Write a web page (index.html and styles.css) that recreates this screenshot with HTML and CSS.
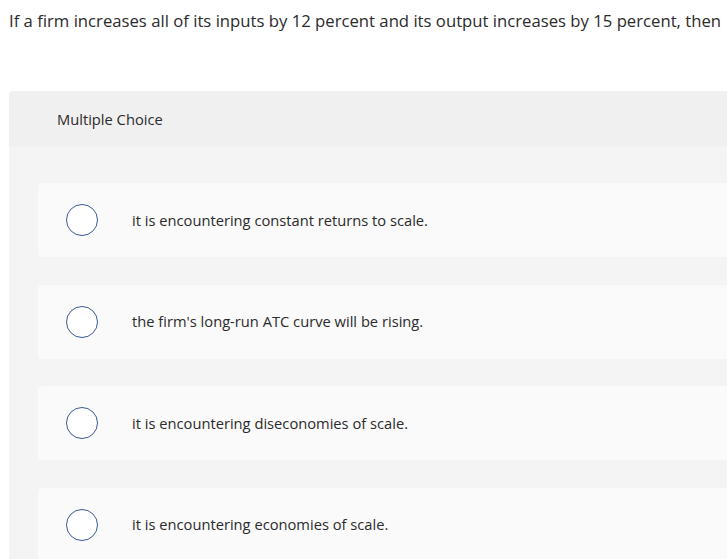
FILE: index.html
```html
<!DOCTYPE html>
<html>
<head>
<meta charset="utf-8">
<link rel="stylesheet" href="styles.css">
</head>
<body>
<p class="question">If a firm increases all of its inputs by 12 percent and its output increases by 15 percent, then</p>
<div class="panel">
  <div class="panel-head">Multiple Choice</div>
  <div class="panel-body">
    <div class="option"><span class="radio"></span><span class="label">it is encountering constant returns to scale.</span></div>
    <div class="option"><span class="radio"></span><span class="label">the firm's long-run ATC curve will be rising.</span></div>
    <div class="option"><span class="radio"></span><span class="label">it is encountering diseconomies of scale.</span></div>
    <div class="option"><span class="radio"></span><span class="label">it is encountering economies of scale.</span></div>
  </div>
</div>
</body>
</html>
```
FILE: styles.css
```css
html, body {
  margin: 0;
  padding: 0;
  background: #ffffff;
  overflow: hidden;
}
body {
  font-family: "Open Sans", "Liberation Sans", sans-serif;
  color: #2b2b2b;
  width: 727px;
  height: 559px;
}
.question {
  margin: 0;
  padding: 10px 0 0 9px;
  font-size: 16.7px;
  line-height: 22px;
  white-space: nowrap;
  height: 80px;
  box-sizing: border-box;
}
.panel {
  margin: 11px 0 0 9px;
  border-radius: 4px 0 0 0;
  overflow: hidden;
}
.panel-head {
  background: #f0f0f0;
  height: 56px;
  display: flex;
  align-items: center;
  padding-left: 48px;
  padding-bottom: 1px;
  box-sizing: border-box;
  font-size: 14.7px;
}
.panel-body {
  background: #f4f4f4;
  padding: 36px 0 0 29px;
  display: flex;
  flex-direction: column;
  gap: 27.67px;
}
.option {
  background: #fafafa;
  height: 74px;
  border-radius: 4px 0 0 4px;
  display: flex;
  align-items: center;
  padding-left: 28px;
  padding-bottom: 1px;
  box-sizing: border-box;
  font-size: 14.7px;
}
.radio {
  width: 32px;
  height: 32px;
  box-sizing: border-box;
  border: 1.5px solid #3a5a94;
  border-radius: 50%;
  background: #ffffff;
  flex: none;
  margin-top: 1px;
}
.label {
  margin-left: 34px;
}
```
